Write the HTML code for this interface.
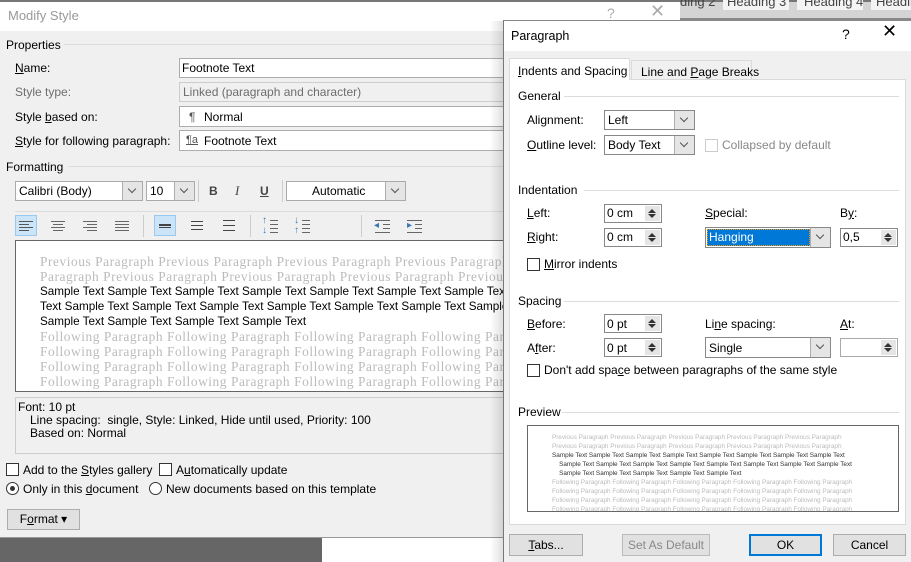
<!DOCTYPE html>
<html><head><meta charset="utf-8">
<style>
*{box-sizing:border-box;margin:0;padding:0}
body{width:911px;height:562px;overflow:hidden;position:relative;background:#fff;font-family:"Liberation Sans",sans-serif;font-size:12px;color:#000}
.a{position:absolute}
.t{position:absolute;white-space:nowrap;line-height:14px}
.f{position:absolute;background:#fff;border:1px solid #adadad}
.cb{position:absolute;width:13px;height:13px;border:1px solid #333;background:#fff}
.dd{position:absolute;top:0;right:0;bottom:0;width:20px;background:#e5e5e5;border-left:1px solid #adadad}
.dd:after{content:"";position:absolute;left:6px;top:4px;width:5px;height:5px;border-right:1px solid #555;border-bottom:1px solid #555;transform:rotate(45deg)}
.sp{position:absolute;top:1px;right:1px;bottom:1px;width:15px;background:#e5e5e5}
.sp:before{content:"";position:absolute;left:3px;top:3px;border-left:4px solid transparent;border-right:4px solid transparent;border-bottom:4px solid #333}
.sp:after{content:"";position:absolute;left:3px;bottom:3px;border-left:4px solid transparent;border-right:4px solid transparent;border-top:4px solid #333}
.hr{position:absolute;height:1px;background:#dcdcdc}
.btn{position:absolute;background:#e1e1e1;border:1px solid #adadad;text-align:center;line-height:19px}
.ib{position:absolute;width:22px;height:21px}
.ib.on{background:#cce4f7;border:1px solid #99c9ef}
.ln{position:absolute;height:1px;background:#444}
</style></head><body>
<div class="a" style="left:0;top:0;width:911px;height:20px;background:#d4d4d4"></div>
<div class="a" style="left:0;top:0;width:911px;height:2px;background:#777"></div>
<div class="a" style="left:680px;top:18px;width:231px;height:2px;background:#888"></div>
<div class="t" style="left:680px;top:-5px;color:#444;font-size:13px">ding 2</div>
<div class="a" style="left:723px;top:0;width:66px;height:10px;background:#f4f4f4"></div>
<div class="t" style="left:727px;top:-5px;color:#444;font-size:13px">Heading 3</div>
<div class="a" style="left:797px;top:0;width:66px;height:10px;background:#f4f4f4"></div>
<div class="t" style="left:804px;top:-5px;color:#444;font-size:13px">Heading 4</div>
<div class="a" style="left:871px;top:0;width:40px;height:10px;background:#f4f4f4"></div>
<div class="t" style="left:876px;top:-5px;color:#444;font-size:13px">Headin</div>
<div class="a" style="left:0;top:538px;width:322px;height:24px;background:#666"></div>

<div class="a" style="left:0;top:2px;width:680px;height:29px;background:#fff"></div>
<div class="t" style="left:8px;top:9px;color:#999;font-size:13px">Modify Style</div>
<div class="t" style="left:607px;top:6px;color:#aaa;font-size:14px">?</div>
<div class="t" style="left:650px;top:4px;color:#aaa;font-size:18px">✕</div>
<div class="a" style="left:0;top:31px;width:503px;height:507px;background:#f0f0f0;border-bottom:1px solid #999"></div>

<div class="t" style="left:6px;top:38px">Properties</div>
<div class="hr" style="left:64px;top:44px;width:440px"></div>
<div class="t" style="left:15px;top:61px"><u>N</u>ame:</div>
<div class="f" style="left:179px;top:58px;width:330px;height:20px"></div>
<div class="t" style="left:182px;top:61px">Footnote Text</div>
<div class="t" style="left:15px;top:85px;color:#6d6d6d">Style type:</div>
<div class="f" style="left:179px;top:82px;width:330px;height:20px;background:#f0f0f0;border-color:#ccc"></div>
<div class="t" style="left:183px;top:85px;color:#6d6d6d">Linked (paragraph and character)</div>
<div class="t" style="left:15px;top:110px">Style <u>b</u>ased on:</div>
<div class="f" style="left:179px;top:106px;width:330px;height:21px"></div>
<div class="t" style="left:189px;top:110px;color:#555">¶</div>
<div class="t" style="left:204px;top:110px">Normal</div>
<div class="t" style="left:15px;top:134px"><u>S</u>tyle for following paragraph:</div>
<div class="f" style="left:179px;top:130px;width:330px;height:21px"></div>
<div class="t" style="left:186px;top:133px;color:#555;font-size:11px"><u>¶a</u></div>
<div class="t" style="left:204px;top:134px">Footnote Text</div>

<div class="t" style="left:6px;top:160px">Formatting</div>
<div class="hr" style="left:68px;top:166px;width:440px"></div>
<div class="f" style="left:15px;top:181px;width:128px;height:20px;border-color:#aaa"><div class="dd"></div></div>
<div class="t" style="left:19px;top:184px">Calibri (Body)</div>
<div class="f" style="left:146px;top:181px;width:49px;height:20px;border-color:#aaa"><div class="dd"></div></div>
<div class="t" style="left:150px;top:184px">10</div>
<div class="a" style="left:198px;top:180px;width:1px;height:22px;background:#ccc"></div>
<div class="t" style="left:209px;top:184px;font-weight:bold;color:#444">B</div>
<div class="t" style="left:235px;top:184px;font-style:italic;font-family:'Liberation Serif',serif;color:#444;font-size:13px">I</div>
<div class="t" style="left:260px;top:184px;font-weight:bold;color:#444;text-decoration:underline">U</div>
<div class="a" style="left:282px;top:180px;width:1px;height:22px;background:#ccc"></div>
<div class="f" style="left:286px;top:181px;width:120px;height:20px;border-color:#aaa"><div class="dd"></div></div>
<div class="t" style="left:312px;top:184px">Automatic</div>
<div class="hr" style="left:15px;top:211px;width:490px"></div>

<div class="ib on" style="left:15px;top:215px"></div>
<div class="ln" style="left:19px;top:221px;width:14px;background:#555"></div><div class="ln" style="left:19px;top:224px;width:10px;background:#555"></div><div class="ln" style="left:19px;top:227px;width:14px;background:#555"></div><div class="ln" style="left:19px;top:230px;width:10px;background:#555"></div>
<div class="ln" style="left:51px;top:221px;width:14px;background:#666"></div><div class="ln" style="left:53px;top:224px;width:10px;background:#666"></div><div class="ln" style="left:51px;top:227px;width:14px;background:#666"></div><div class="ln" style="left:53px;top:230px;width:10px;background:#666"></div>
<div class="ln" style="left:83px;top:221px;width:14px;background:#666"></div><div class="ln" style="left:87px;top:224px;width:10px;background:#666"></div><div class="ln" style="left:83px;top:227px;width:14px;background:#666"></div><div class="ln" style="left:87px;top:230px;width:10px;background:#666"></div>
<div class="ln" style="left:115px;top:221px;width:14px;background:#666"></div><div class="ln" style="left:115px;top:224px;width:14px;background:#666"></div><div class="ln" style="left:115px;top:227px;width:14px;background:#666"></div><div class="ln" style="left:115px;top:230px;width:14px;background:#666"></div>
<div class="a" style="left:143px;top:215px;width:1px;height:22px;background:#ccc"></div>
<div class="ib on" style="left:154px;top:215px"></div>
<div class="ln" style="left:159px;top:224px;width:12px;height:2px"></div><div class="ln" style="left:159px;top:227px;width:12px;height:1px"></div>
<div class="ln" style="left:191px;top:221px;width:12px"></div><div class="ln" style="left:191px;top:225px;width:12px"></div><div class="ln" style="left:191px;top:229px;width:12px"></div>
<div class="ln" style="left:223px;top:220px;width:12px"></div><div class="ln" style="left:223px;top:225px;width:12px"></div><div class="ln" style="left:223px;top:230px;width:12px"></div>
<div class="a" style="left:250px;top:215px;width:1px;height:22px;background:#ccc"></div>
<div class="t" style="left:262px;top:216px;color:#3a78b8;font-size:10px;line-height:10px">↑<br>↓</div>
<div class="ln" style="left:270px;top:220px;width:8px;background:#666"></div><div class="ln" style="left:270px;top:224px;width:8px;background:#666"></div><div class="ln" style="left:270px;top:228px;width:8px;background:#666"></div><div class="ln" style="left:270px;top:232px;width:8px;background:#666"></div>
<div class="t" style="left:294px;top:216px;color:#3a78b8;font-size:10px;line-height:10px">↓<br>↑</div>
<div class="ln" style="left:302px;top:220px;width:8px;background:#666"></div><div class="ln" style="left:302px;top:224px;width:8px;background:#666"></div><div class="ln" style="left:302px;top:228px;width:8px;background:#666"></div><div class="ln" style="left:302px;top:232px;width:8px;background:#666"></div>
<div class="a" style="left:361px;top:215px;width:1px;height:22px;background:#ccc"></div>
<div class="t" style="left:374px;top:219px;color:#3a78b8;font-size:10px">◂</div>
<div class="ln" style="left:375px;top:220px;width:15px;background:#666"></div><div class="ln" style="left:383px;top:224px;width:7px;background:#666"></div><div class="ln" style="left:383px;top:228px;width:7px;background:#666"></div><div class="ln" style="left:375px;top:232px;width:15px;background:#666"></div>
<div class="t" style="left:407px;top:219px;color:#3a78b8;font-size:10px">▸</div>
<div class="ln" style="left:407px;top:220px;width:15px;background:#666"></div><div class="ln" style="left:415px;top:224px;width:7px;background:#666"></div><div class="ln" style="left:415px;top:228px;width:7px;background:#666"></div><div class="ln" style="left:407px;top:232px;width:15px;background:#666"></div>

<div class="a" style="left:15px;top:240px;width:495px;height:152px;background:#fff;border:1px solid #666;overflow:hidden">
<div style="position:absolute;left:24px;top:13px;font-family:'Liberation Serif',serif;font-size:13.4px;letter-spacing:0.55px;line-height:15px;color:#bbb;white-space:nowrap">Previous Paragraph Previous Paragraph Previous Paragraph Previous Paragraph Previous Paragraph<br>Paragraph Previous Paragraph Previous Paragraph Previous Paragraph Previous Paragraph</div>
<div style="position:absolute;left:24px;top:43px;font-size:11.7px;line-height:15px;white-space:nowrap">Sample Text Sample Text Sample Text Sample Text Sample Text Sample Text Sample Text<br>Text Sample Text Sample Text Sample Text Sample Text Sample Text Sample Text Sample Text<br>Sample Text Sample Text Sample Text Sample Text</div>
<div style="position:absolute;left:24px;top:88px;font-family:'Liberation Serif',serif;font-size:13.4px;letter-spacing:0.55px;line-height:15px;color:#bbb;white-space:nowrap">Following Paragraph Following Paragraph Following Paragraph Following Paragraph Following<br>Following Paragraph Following Paragraph Following Paragraph Following Paragraph Following<br>Following Paragraph Following Paragraph Following Paragraph Following Paragraph Following<br>Following Paragraph Following Paragraph Following Paragraph Following Paragraph Following</div>
</div>
<div class="a" style="left:15px;top:397px;width:495px;height:57px;border:1px solid #ccc"></div>
<div class="t" style="left:18px;top:400px">Font: 10 pt</div>
<div class="t" style="left:30px;top:413px">Line spacing:&nbsp; single, Style: Linked, Hide until used, Priority: 100</div>
<div class="t" style="left:30px;top:426px">Based on: Normal</div>

<div class="cb" style="left:6px;top:463px"></div>
<div class="t" style="left:23px;top:463px">Add to the <u>S</u>tyles gallery</div>
<div class="cb" style="left:159px;top:463px"></div>
<div class="t" style="left:176px;top:463px">A<u>u</u>tomatically update</div>
<div class="a" style="left:6px;top:482px;width:13px;height:13px;border:1px solid #333;border-radius:50%;background:#fff"><div class="a" style="left:3px;top:3px;width:5px;height:5px;border-radius:50%;background:#333"></div></div>
<div class="t" style="left:23px;top:482px">Only in this <u>d</u>ocument</div>
<div class="a" style="left:149px;top:482px;width:13px;height:13px;border:1px solid #333;border-radius:50%;background:#fff"></div>
<div class="t" style="left:166px;top:482px">New documents based on this template</div>
<div class="btn" style="left:7px;top:509px;width:73px;height:21px">F<u>o</u>rmat ▾</div>

<div class="a" style="left:490px;top:21px;width:13px;height:541px;background:linear-gradient(to right,rgba(0,0,0,0),rgba(0,0,0,.12))"></div>
<div class="a" style="left:503px;top:20px;width:408px;height:542px;background:#f0f0f0;border-left:1px solid #777;border-top:1px solid #888"></div>
<div class="a" style="left:504px;top:21px;width:407px;height:30px;background:#fff"></div>
<div class="t" style="left:511px;top:29px;font-size:12.5px">Paragraph</div>
<div class="t" style="left:842px;top:27px;font-size:14px">?</div>
<div class="t" style="left:882px;top:24px;font-size:18px;font-weight:100">✕</div>

<div class="a" style="left:509px;top:79px;width:397px;height:446px;background:#fff;border:1px solid #dadada"></div>
<div class="a" style="left:509px;top:58px;width:121px;height:22px;background:#fff;border:1px solid #dadada;border-bottom:none"></div>
<div class="t" style="left:518px;top:64px"><u>I</u>ndents and Spacing</div>
<div class="a" style="left:631px;top:60px;width:121px;height:19px;background:#f0f0f0;border:1px solid #dadada;border-bottom:none"></div>
<div class="t" style="left:641px;top:65px">Line and <u>P</u>age Breaks</div>

<div class="t" style="left:518px;top:89px">General</div>
<div class="hr" style="left:564px;top:96px;width:335px"></div>
<div class="t" style="left:527px;top:113px">Ali<u>g</u>nment:</div>
<div class="f" style="left:604px;top:110px;width:91px;height:20px;border-color:#888"><div class="dd"></div></div>
<div class="t" style="left:608px;top:113px">Left</div>
<div class="t" style="left:527px;top:138px"><u>O</u>utline level:</div>
<div class="f" style="left:604px;top:135px;width:91px;height:20px;border-color:#888"><div class="dd"></div></div>
<div class="t" style="left:608px;top:138px">Body Text</div>
<div class="cb" style="left:705px;top:139px;border-color:#ccc"></div>
<div class="t" style="left:722px;top:138px;color:#888">Collapsed by default</div>

<div class="t" style="left:518px;top:183px">Indentation</div>
<div class="hr" style="left:584px;top:190px;width:315px"></div>
<div class="t" style="left:527px;top:206px"><u>L</u>eft:</div>
<div class="f" style="left:604px;top:204px;width:58px;height:19px;border-color:#888"><div class="sp"></div></div>
<div class="t" style="left:607px;top:206px">0 cm</div>
<div class="t" style="left:527px;top:230px"><u>R</u>ight:</div>
<div class="f" style="left:604px;top:228px;width:58px;height:19px;border-color:#888"><div class="sp"></div></div>
<div class="t" style="left:607px;top:230px">0 cm</div>
<div class="t" style="left:705px;top:206px"><u>S</u>pecial:</div>
<div class="f" style="left:705px;top:227px;width:126px;height:21px;border-color:#888"><div class="dd"></div><div class="a" style="left:1px;top:1px;width:103px;height:17px;background:#0078d7;border:1px dotted #f90"></div></div>
<div class="t" style="left:709px;top:230px;color:#fff">Hanging</div>
<div class="t" style="left:840px;top:206px">B<u>y</u>:</div>
<div class="f" style="left:840px;top:228px;width:58px;height:19px;border-color:#888"><div class="sp"></div></div>
<div class="t" style="left:843px;top:230px">0,5</div>
<div class="cb" style="left:527px;top:258px"></div>
<div class="t" style="left:544px;top:257px"><u>M</u>irror indents</div>

<div class="t" style="left:518px;top:294px">Spacing</div>
<div class="hr" style="left:564px;top:301px;width:335px"></div>
<div class="t" style="left:527px;top:317px"><u>B</u>efore:</div>
<div class="f" style="left:604px;top:314px;width:58px;height:19px;border-color:#888"><div class="sp"></div></div>
<div class="t" style="left:607px;top:317px">0 pt</div>
<div class="t" style="left:527px;top:341px">A<u>f</u>ter:</div>
<div class="f" style="left:604px;top:338px;width:58px;height:19px;border-color:#888"><div class="sp"></div></div>
<div class="t" style="left:607px;top:341px">0 pt</div>
<div class="t" style="left:705px;top:317px">Li<u>n</u>e spacing:</div>
<div class="f" style="left:705px;top:337px;width:126px;height:21px;border-color:#888"><div class="dd"></div></div>
<div class="t" style="left:709px;top:341px">Single</div>
<div class="t" style="left:840px;top:317px"><u>A</u>t:</div>
<div class="f" style="left:840px;top:338px;width:58px;height:19px;border-color:#aaa"><div class="sp"></div></div>
<div class="cb" style="left:527px;top:364px"></div>
<div class="t" style="left:544px;top:363px">Don't add spa<u>c</u>e between paragraphs of the same style</div>

<div class="t" style="left:518px;top:405px">Preview</div>
<div class="hr" style="left:562px;top:412px;width:337px"></div>
<div class="a" style="left:527px;top:425px;width:372px;height:87px;background:#fff;border:1px solid #666;overflow:hidden">
<div style="position:absolute;left:24px;top:7px;font-size:6.4px;line-height:9px;white-space:nowrap;color:#bbb">Previous Paragraph Previous Paragraph Previous Paragraph Previous Paragraph Previous Paragraph<br>Previous Paragraph Previous Paragraph Previous Paragraph Previous Paragraph Previous Paragraph</div>
<div style="position:absolute;left:24px;top:25px;font-size:6.4px;line-height:9px;white-space:nowrap;color:#333">Sample Text Sample Text Sample Text Sample Text Sample Text Sample Text Sample Text Sample Text<br>&nbsp;&nbsp;&nbsp;&nbsp;Sample Text Sample Text Sample Text Sample Text Sample Text Sample Text Sample Text Sample Text<br>&nbsp;&nbsp;&nbsp;&nbsp;Sample Text Sample Text Sample Text Sample Text Sample Text</div>
<div style="position:absolute;left:24px;top:52px;font-size:6.4px;line-height:9px;white-space:nowrap;color:#bbb">Following Paragraph Following Paragraph Following Paragraph Following Paragraph Following Paragraph<br>Following Paragraph Following Paragraph Following Paragraph Following Paragraph Following Paragraph<br>Following Paragraph Following Paragraph Following Paragraph Following Paragraph Following Paragraph<br>Following Paragraph Following Paragraph Following Paragraph Following Paragraph Following Paragraph</div>
</div>

<div class="btn" style="left:509px;top:534px;width:74px;height:22px;line-height:20px"><u>T</u>abs...</div>
<div class="btn" style="left:622px;top:534px;width:88px;height:22px;line-height:20px;color:#888;border-color:#bbb">Set As Default</div>
<div class="btn" style="left:749px;top:534px;width:73px;height:22px;line-height:18px;border:2px solid #0078d7">OK</div>
<div class="btn" style="left:833px;top:534px;width:73px;height:22px;line-height:20px">Cancel</div>
</body></html>
